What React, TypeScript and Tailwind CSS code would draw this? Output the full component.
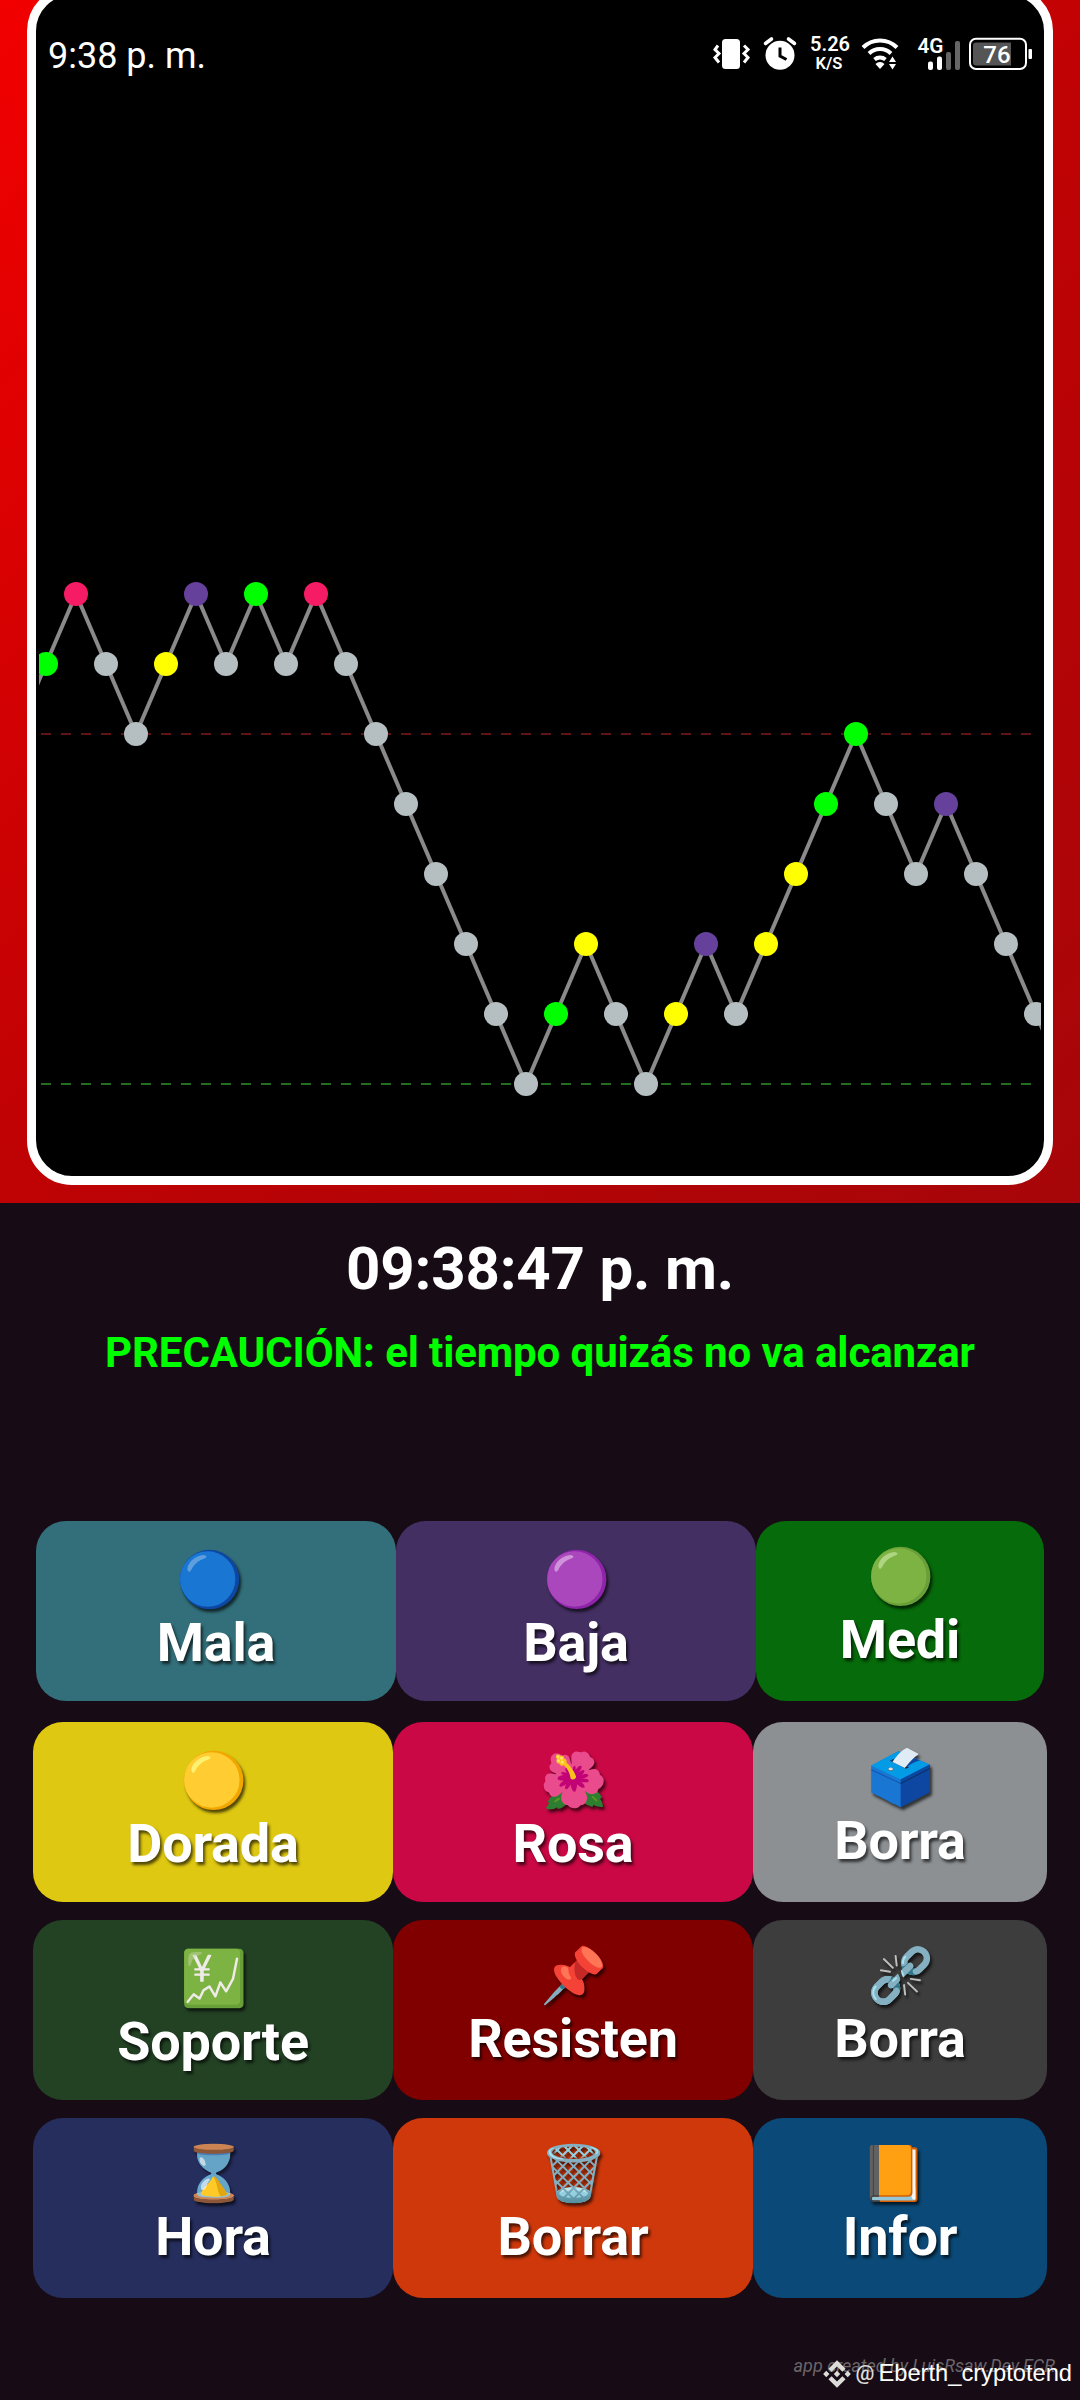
import clsx from 'clsx';

const STEP_X = 30;
const STEP_Y = 70;

const colors: Record<string, string> = {
  green: '#00ff00',
  pink: '#f51c65',
  gray: '#b5bec0',
  yellow: '#ffff00',
  purple: '#65419c'
};

// Gray results move the line down one level, every other colour moves it up
const results = [
  'green', 'pink', 'gray', 'gray', 'yellow', 'purple', 'gray', 'green', 'gray', 'pink',
  'gray', 'gray', 'gray', 'gray', 'gray', 'gray', 'gray', 'green', 'yellow', 'gray',
  'gray', 'yellow', 'purple', 'gray', 'yellow', 'yellow', 'green', 'green', 'gray', 'gray',
  'purple', 'gray', 'gray', 'gray', 'gray'
];

function ResultChart() {
  let y = 734;
  const points = results.map((color, index) => {
    y += color === 'gray' ? STEP_Y : -STEP_Y;
    return { x: 7 + index * STEP_X, y, color };
  });
  const line = [{ x: -23, y: 734 }, ...points].map(p => `${p.x},${p.y}`).join(' ');

  return (
    <svg className="block h-[1100px] w-full" viewBox="0 76 1002 1100" fill="none">
      <line x1="2" y1="734" x2="992" y2="734" stroke="#5e1414" strokeWidth="2" strokeDasharray="10 10" />
      <line x1="2" y1="1084" x2="992" y2="1084" stroke="#226d22" strokeWidth="2" strokeDasharray="10 10" />
      <polyline points={line} stroke="#8a8a8a" strokeWidth="4" />
      {points.map((point, index) => (
        <circle key={index} cx={point.x} cy={point.y} r="12" fill={colors[point.color]} />
      ))}
    </svg>
  );
}

function StatusBar() {
  return (
    <div className="flex h-[81px] items-start justify-between pl-[9px] text-white">
      <span className="mt-[38px] text-[36px] leading-[46px]">9:38 p. m.</span>
      <svg className="mr-[6px] mt-[35px] block h-[46px] w-[324px]" viewBox="711 30 324 46" fill="none">
        {/* vibrate */}
        <rect x="722" y="39" width="18" height="30" rx="3.5" fill="#fff" />
        <path d="M718 45.500l-3 4 4 4-4 4 4 5M744 45.500l4 4-4 4 4 4-4 5" stroke="#fff" strokeWidth="3" />
        {/* alarm */}
        <circle cx="780" cy="55.300" r="14.500" fill="#fff" />
        <path d="M765.500 43.500l6-4.500M794.500 43.500l-6-4.500" stroke="#fff" strokeWidth="3.600" strokeLinecap="round" />
        <path d="M780 47.500v8.500l6.500 3.500" stroke="#000" strokeWidth="3" />
        {/* network speed */}
        <text x="830" y="50.700" fill="#fff" fontSize="20" fontWeight="600" textAnchor="middle">5.26</text>
        <text x="829" y="69" fill="#fff" fontSize="16.500" fontWeight="600" textAnchor="middle">K/S</text>
        {/* wifi */}
        <path d="M863 47.500a24 24 0 0 1 34 0" stroke="#fff" strokeWidth="4" />
        <path d="M869 53.500a16 16 0 0 1 22 0" stroke="#fff" strokeWidth="4" />
        <path d="M874.500 59.500a9 9 0 0 1 11 0" stroke="#fff" strokeWidth="4" />
        <path d="M880 69l-4.500-5a6 6 0 0 1 9 0z" fill="#fff" />
        <path d="M892.500 56.500l3.500 5.500h-7zM892.500 69.500l3.500-5.500h-7z" fill="#fff" />
        {/* mobile signal */}
        <text x="917.500" y="53" fill="#fff" fontSize="21" fontWeight="600" textLength="26" lengthAdjust="spacingAndGlyphs">4G</text>
        <rect x="928" y="61.500" width="5" height="8.500" rx="2" fill="#fff" />
        <rect x="937" y="56.500" width="5" height="13.500" rx="2" fill="#fff" />
        <rect x="946" y="52" width="5" height="18" rx="2" fill="#666" />
        <rect x="955" y="41" width="5" height="29" rx="2" fill="#666" />
        {/* battery */}
        <rect x="970" y="38.700" width="56" height="30.300" rx="6" stroke="#fff" strokeWidth="2" />
        <path d="M976 42.500h35v23h-35a3 3 0 0 1-3-3v-17a3 3 0 0 1 3-3z" fill="#555" />
        <rect x="1028.500" y="49" width="3.500" height="10" rx="1" fill="#fff" />
        <text x="997" y="62.500" fill="#fff" fontSize="24" fontWeight="500" textAnchor="middle">76</text>
      </svg>
    </div>
  );
}

interface ActionButton {
  icon: string;
  label: string;
  className: string;
  raised?: boolean;
  iconClassName?: string;
}

const rows: { className: string; buttons: ActionButton[] }[] = [
  {
    className: 'mb-[21px] px-[36px]',
    buttons: [
      { icon: '🔵', label: 'Mala', className: 'bg-[#326f7a]', iconClassName: 'pr-[14px]' },
      { icon: '🟣', label: 'Baja', className: 'bg-[#442f63]' },
      { icon: '🟢', label: 'Medi', className: 'bg-[#066b0a]', raised: true }
    ]
  },
  {
    className: 'mb-[18px] px-[33px]',
    buttons: [
      { icon: '🟡', label: 'Dorada', className: 'bg-[#dfc811]' },
      { icon: '🌺', label: 'Rosa', className: 'bg-[#c90845]' },
      { icon: '🗳️', label: 'Borra', className: 'bg-[#8c9093]', raised: true }
    ]
  },
  {
    className: 'mb-[18px] px-[33px]',
    buttons: [
      { icon: '💹', label: 'Soporte', className: 'bg-[#234224]' },
      { icon: '📌', label: 'Resisten', className: 'bg-[#800000]', raised: true },
      { icon: '⛓️‍💥', label: 'Borra', className: 'bg-[#3d3d3d]', raised: true }
    ]
  },
  {
    className: 'px-[33px]',
    buttons: [
      { icon: '⌛', label: 'Hora', className: 'bg-[#262e5e]', raised: true },
      { icon: '🗑️', label: 'Borrar', className: 'bg-[#cf380b]', raised: true },
      { icon: '📙', label: 'Infor', className: 'bg-[#0b4a78]', raised: true, iconClassName: 'pr-[14px]' }
    ]
  }
];

export default function App() {
  return (
    <div className="relative flex h-[2400px] w-[1080px] flex-col overflow-hidden bg-[#170c15] font-[Roboto,sans-serif]">
      <div className="h-[1203px] overflow-hidden bg-[linear-gradient(135deg,#f20000_0%,#c00204_50%,#a60609_100%)] px-[27px]">
        <div className="-mt-[14px] h-[1199px] overflow-hidden rounded-[45px] border-[9px] border-white bg-black px-[3px]">
          <StatusBar />
          <ResultChart />
        </div>
      </div>

      <h1 className="mt-[31px] text-center text-[60px] font-bold leading-[70px] tracking-[-0.2px] text-white">
        09:38:47 p. m.
      </h1>
      <p className="mt-[24px] text-center text-[42px] font-bold leading-[50px] tracking-[-0.1px] text-[#00ff00]">
        PRECAUCIÓN: el tiempo quizás no va alcanzar
      </p>

      <div className="mt-[143px]">
        {rows.map((row, index) => (
          <div key={index} className={clsx('flex', row.className)}>
            {row.buttons.map((button, column) => (
              <button
                key={column}
                className={clsx(
                  'flex h-[180px] flex-col items-center rounded-[30px] text-[54px] font-bold leading-[64px] text-white [text-shadow:2px_3px_3px_rgba(0,0,0,0.65)]',
                  column < 2 ? 'w-[360px]' : 'flex-1',
                  button.raised ? 'pt-[26px]' : 'pt-[29px]',
                  button.className
                )}
              >
                <span className={clsx('h-[61px] leading-[60px]', button.iconClassName)}>{button.icon}</span>
                <span className="tracking-[-0.2px]">{button.label}</span>
              </button>
            ))}
          </div>
        ))}
      </div>

      <p className="mt-[57px] pr-[25px] text-right text-[18px] italic leading-[22px] text-[#6b666a]">
        app created by LuisRsaw.Dev.ECR
      </p>
      <div className="absolute right-[8px] top-[2358px] flex h-[32px] items-center text-white">
        <svg className="mr-[5px] size-[28px]" viewBox="0 0 126 126" fill="#dcdcd8">
          <path d="M38.700 53.200L63 28.900l24.300 24.300 14.200-14.100L63 .6 24.500 39.100zM.6 63l14.100-14.100L28.900 63 14.700 77.100zM38.700 72.800L63 97.100l24.300-24.300 14.200 14.100L63 125.400 24.500 86.900zM97.100 63l14.200-14.100L125.400 63l-14.100 14.100zM77.400 63L63 48.600 48.600 63 63 77.400z" />
        </svg>
        <span className="mr-[4px] text-[21px] font-medium text-[#dcdcd8]">@</span>
        <span className="font-['Liberation_Sans',sans-serif] text-[23.7px]">Eberth_cryptotend</span>
      </div>
    </div>
  );
}
